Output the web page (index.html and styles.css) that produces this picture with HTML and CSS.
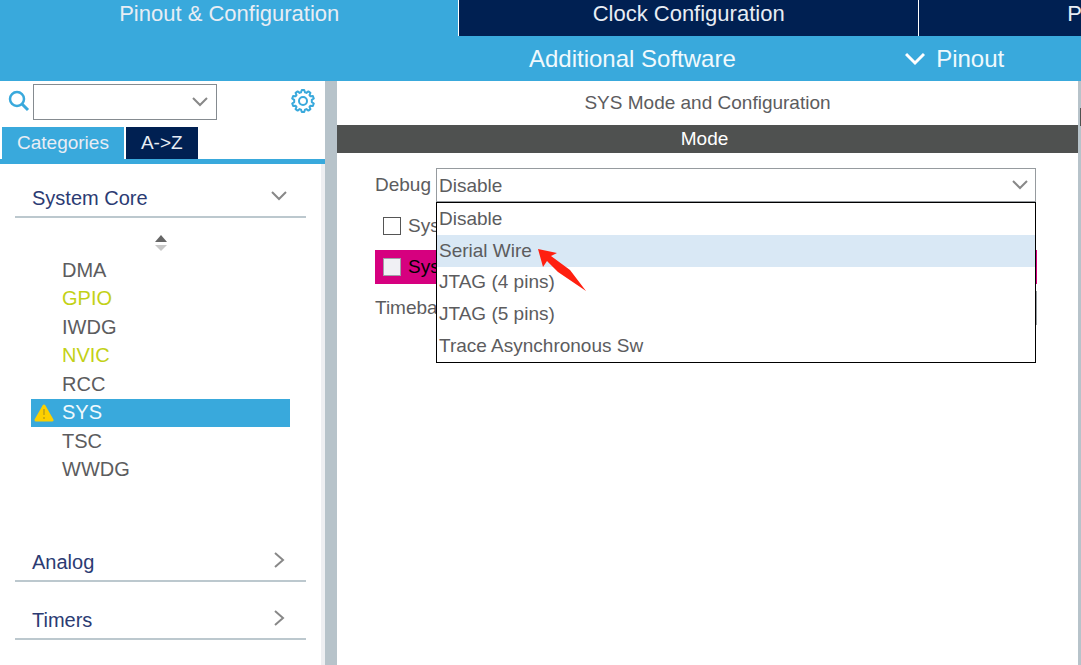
FILE: index.html
```
<!DOCTYPE html>
<html lang="en">
<head>
  <meta charset="UTF-8" />
  <meta name="viewport" content="width=device-width, initial-scale=1.0" />
  <title>Pinout &amp; Configuration</title>
  <link rel="stylesheet" href="styles.css">
</head>
<body>
  <nav class="main-tabs">
    <button type="button" class="main-tab active">Pinout &amp; Configuration</button>
    <button type="button" class="main-tab">Clock Configuration</button>
    <button type="button" class="main-tab">Project Manager</button>
  </nav>

  <div class="toolbar">
    <button type="button" class="tool software">Additional Software</button>
    <button type="button" class="tool pinout">
      <svg width="20" height="14" viewBox="0 0 20 14"><path d="M1 2 L10 11 L19 2" fill="none" stroke="#fff" stroke-width="3"/></svg>
      Pinout
    </button>
  </div>

  <div class="workspace">
    <aside class="sidebar">
      <div class="search-row">
        <svg class="search-icon" width="22" height="22" viewBox="0 0 22 22" fill="none" stroke="#39a9dc">
          <circle cx="9" cy="9" r="7" stroke-width="2.5"/>
          <path d="M14 14 L20 20" stroke-width="3"/>
        </svg>
        <div class="search-box">
          <input type="text" aria-label="Search">
          <button type="button" aria-label="Show searches">
            <svg width="16" height="10" viewBox="0 0 16 10"><path d="M1 1 L8 8 L15 1" fill="none" stroke="#888" stroke-width="2"/></svg>
          </button>
        </div>
        <button type="button" class="gear" aria-label="Settings">
          <svg width="26" height="26" viewBox="-13 -13 26 26" fill="none" stroke="#39a9dc" stroke-width="2">
            <circle r="4"/>
            <path stroke-linejoin="round" d="M-2 -8.6 L-1.2 -11 H1.2 L2 -8.6 L3.4 -8.1 L5.4 -9.6 L7.4 -8.2 L6.5 -5.9 L7.5 -4.7 L9.9 -4.9 L10.8 -2.5 L8.8 -1.1 V1.1 L10.8 2.5 L9.9 4.9 L7.5 4.7 L6.5 5.9 L7.4 8.2 L5.4 9.6 L3.4 8.1 L2 8.6 L1.2 11 H-1.2 L-2 8.6 L-3.4 8.1 L-5.4 9.6 L-7.4 8.2 L-6.5 5.9 L-7.5 4.7 L-9.9 4.9 L-10.8 2.5 L-8.8 1.1 V-1.1 L-10.8 -2.5 L-9.9 -4.9 L-7.5 -4.7 L-6.5 -5.9 L-7.4 -8.2 L-5.4 -9.6 L-3.4 -8.1 Z"/>
          </svg>
        </button>
      </div>

      <div class="side-tabs">
        <button type="button" class="side-tab active">Categories</button>
        <button type="button" class="side-tab">A-&gt;Z</button>
      </div>

      <div class="tree">
        <button type="button" class="group">
          System Core
          <svg width="16" height="16" viewBox="0 0 16 16"><path d="M1 4 L8 11 L15 4" fill="none" stroke="#888" stroke-width="2"/></svg>
        </button>
        <div class="group-body">
          <button type="button" class="sorter" aria-label="Sort">
            <svg width="12" height="16" viewBox="0 0 12 16"><path d="M0 7 L6 0 L12 7 Z" fill="#666"/><path d="M0 10 L6 16 L12 10 Z" fill="#c8c8c8"/></svg>
          </button>
          <ul class="items">
            <li><a href="#">DMA</a></li>
            <li><a href="#" class="used">GPIO</a></li>
            <li><a href="#">IWDG</a></li>
            <li><a href="#" class="used">NVIC</a></li>
            <li><a href="#">RCC</a></li>
            <li><a href="#" class="selected">
              <svg width="20" height="18" viewBox="0 0 20 18"><path d="M10 2 L18 16 H2 Z" fill="#fcd000" stroke="#fcd000" stroke-width="3" stroke-linejoin="round"/><path d="M10 5 V11 M10 13 V15" stroke="#a08a20" stroke-width="1"/></svg>
              SYS</a></li>
            <li><a href="#">TSC</a></li>
            <li><a href="#">WWDG</a></li>
          </ul>
        </div>
        <button type="button" class="group">
          Analog
          <svg width="16" height="16" viewBox="0 0 16 16"><path d="M4 1 L12 8 L4 15" fill="none" stroke="#888" stroke-width="2"/></svg>
        </button>
        <button type="button" class="group">
          Timers
          <svg width="16" height="16" viewBox="0 0 16 16"><path d="M4 1 L12 8 L4 15" fill="none" stroke="#888" stroke-width="2"/></svg>
        </button>
      </div>
    </aside>

    <div class="divider"></div>

    <main class="config">
      <h1>SYS Mode and Configuration</h1>
      <h2>Mode</h2>
      <form class="mode-form">
        <div class="row">
          <label for="debug">Debug</label>
          <div class="combo">
            <select id="debug">
              <option>Disable</option>
              <option>Serial Wire</option>
              <option>JTAG (4 pins)</option>
              <option>JTAG (5 pins)</option>
              <option>Trace Asynchronous Sw</option>
            </select>
            <svg class="chevron" width="16" height="10" viewBox="0 0 16 10"><path d="M1 1 L8 8 L15 1" fill="none" stroke="#888" stroke-width="2"/></svg>
            <ul class="popup" role="listbox" aria-label="Debug">
              <li role="option">Disable</li>
              <li role="option" class="hover">Serial Wire</li>
              <li role="option">JTAG (4 pins)</li>
              <li role="option">JTAG (5 pins)</li>
              <li role="option">Trace Asynchronous Sw</li>
            </ul>
            <svg class="pointer" width="48" height="43" viewBox="0 0 48 43"><path d="M0 0 L19 4 L13 7 L32 21 L48 42 L20 23 L9 12 L5 18 Z" fill="#ff2010"/></svg>
          </div>
        </div>
        <div class="row check">
          <input type="checkbox" id="wakeup">
          <label for="wakeup">System Wake-Up</label>
        </div>
        <div class="row check conflict">
          <input type="checkbox" id="wakeup2" disabled>
          <label for="wakeup2">System Wake-Up</label>
        </div>
        <div class="row timebase">
          <label for="timebase">Timebase Source</label>
          <div class="combo">
            <select id="timebase"><option>SysTick</option></select>
          </div>
        </div>
      </form>
    </main>

    <div class="right-edge"></div>
  </div>
</body>
</html>
```
FILE: styles.css
```
* {
  box-sizing: border-box;
}

body {
  margin: 0;
  min-height: 100vh;
  display: flex;
  flex-direction: column;
  overflow: hidden;
  background: #fff;
  color: #5c5c5e;
  font-family: "Liberation Sans", Arial, sans-serif;
  font-size: 19px;
}

button,
input,
select {
  font: inherit;
  color: inherit;
  background: none;
  border: none;
  border-radius: 0;
  margin: 0;
  padding: 0;
}

svg {
  display: block;
  flex: none;
}

ul {
  list-style: none;
  margin: 0;
  padding: 0;
}

/* Top tabs */
.main-tabs {
  display: grid;
  grid-template-columns: repeat(3, 42.5%);
  height: 36px;
  overflow: hidden;
}

.main-tab {
  background: #002052;
  color: #e8edf4;
  font-size: 22px;
  line-height: 28px;
  padding-bottom: 8px;
  border-right: 1px solid #fff;
}

.main-tab.active {
  background: #39a9dc;
}

.toolbar {
  display: grid;
  grid-template-columns: 37% 23%;
  justify-content: end;
  height: 45px;
  background: #39a9dc;
  color: #f0f9fd;
}

.tool {
  display: flex;
  align-items: center;
  justify-content: center;
  gap: 11px;
  font-size: 24px;
}

.tool.pinout {
  padding-right: 4px;
}

.workspace {
  flex: 1;
  display: flex;
}

/* Left side */
.sidebar {
  flex: none;
  width: 325px;
  display: flex;
  flex-direction: column;
}

.search-row {
  display: flex;
  align-items: center;
  height: 46px;
  padding: 0 9px 6px 8px;
}

.search-box {
  display: flex;
  width: 184px;
  height: 36px;
  margin: 2px auto 0 3px;
  border: 1px solid #858b90;
}

.search-box input {
  flex: 1;
  min-width: 0;
  padding: 0 4px;
}

.search-box button {
  padding: 0 8px;
}

.side-tabs {
  display: flex;
  gap: 2px;
  height: 37px;
  padding-left: 2px;
  border-bottom: 5px solid #39a9dc;
}

.side-tab {
  padding: 0 15px;
  background: #002052;
  color: #e8edf4;
}

.side-tab.active {
  background: #39a9dc;
}

.tree {
  flex: 1;
  padding: 14px 15px 0;
  border-right: 4px solid #eeeff2;
  font-size: 20px;
}

.group {
  display: flex;
  align-items: center;
  justify-content: space-between;
  width: 100%;
  height: 40px;
  padding: 3px 19px 0 17px;
  border-bottom: 2px solid #bcc8ce;
  color: #2b3b73;
}

.group svg {
  margin-bottom: 5px;
}

.group + .group {
  margin-top: 18px;
}

.group-body {
  padding: 17px 16px 58px;
}

.sorter {
  display: block;
  margin: 0 auto 5px;
}

.items {
  display: grid;
  grid-template-rows: repeat(8, 1fr);
  height: 228px;
}

.items a {
  display: flex;
  align-items: center;
  height: 100%;
  padding-left: 31px;
  color: #5c5c5e;
  text-decoration: none;
}

.items .used {
  color: #c3d117;
}

.items .selected {
  gap: 8px;
  padding-left: 3px;
  background: #39a9dc;
  color: #f0f9fd;
}

.divider {
  flex: none;
  width: 12px;
  background: #b7c3ca;
}

/* Mode panel */
.config {
  flex: 1;
  min-width: 0;
}

h1,
h2 {
  margin: 0;
  font-size: 19px;
  font-weight: normal;
  text-align: center;
}

h1 {
  line-height: 44px;
}

h2 {
  line-height: 28px;
  padding-right: 6px;
  background: #4f5150;
  color: #fff;
}

.mode-form {
  display: flex;
  flex-direction: column;
  gap: 7px;
  padding: 15px 42px 0 38px;
}

.row {
  display: flex;
  align-items: center;
  gap: 5px;
  height: 34px;
}

.combo {
  position: relative;
  flex: 1;
  height: 34px;
}

.combo select {
  width: 100%;
  height: 100%;
  padding-left: 2px;
  border: 1px solid #969b9f;
  appearance: none;
}

.chevron {
  position: absolute;
  right: 8px;
  top: 12px;
}

.popup {
  position: absolute;
  z-index: 1;
  top: 100%;
  left: 0;
  right: 0;
  display: grid;
  grid-template-rows: repeat(5, 1fr);
  height: 161px;
  background: #fff;
  border: 1px solid #000;
}

.popup li {
  display: flex;
  align-items: center;
  padding-left: 2px;
}

.popup .hover {
  background: #d9e8f5;
}

.pointer {
  position: absolute;
  z-index: 2;
  left: 102px;
  top: 81px;
}

.check {
  gap: 7px;
  padding-left: 8px;
}

.check input {
  width: 18px;
  height: 18px;
  appearance: none;
  background: #fff;
  border: 1px solid #555;
}

.conflict {
  margin-right: -1px;
  background: #d6007f;
  color: #000;
}

.conflict input {
  background: #f0f0f4;
  border-color: #a0a0a8;
}

.timebase {
  margin-right: -1px;
}

.right-edge {
  position: relative;
  flex: none;
  width: 3px;
  background: #b7c3ca;
}

.right-edge::after {
  content: "";
  position: absolute;
  right: 0;
  top: 27px;
  width: 1px;
  height: 18px;
  background: #4f5150;
}
```
